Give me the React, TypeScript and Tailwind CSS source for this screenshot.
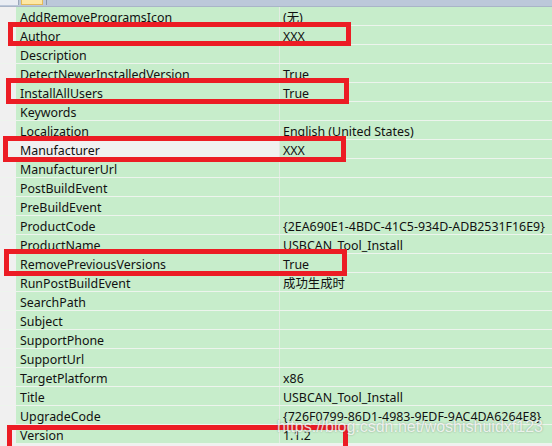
const rows: [string, string][] = [
  ['AddRemoveProgramsIcon', '(无)'],
  ['Author', 'XXX'],
  ['Description', ''],
  ['DetectNewerInstalledVersion', 'True'],
  ['InstallAllUsers', 'True'],
  ['Keywords', ''],
  ['Localization', 'English (United States)'],
  ['Manufacturer', 'XXX'],
  ['ManufacturerUrl', ''],
  ['PostBuildEvent', ''],
  ['PreBuildEvent', ''],
  ['ProductCode', '{2EA690E1-4BDC-41C5-934D-ADB2531F16E9}'],
  ['ProductName', 'USBCAN_Tool_Install'],
  ['RemovePreviousVersions', 'True'],
  ['RunPostBuildEvent', '成功生成时'],
  ['SearchPath', ''],
  ['Subject', ''],
  ['SupportPhone', ''],
  ['SupportUrl', ''],
  ['TargetPlatform', 'x86'],
  ['Title', 'USBCAN_Tool_Install'],
  ['UpgradeCode', '{726F0799-86D1-4983-9EDF-9AC4DA6264E8}'],
  ['Version', '1.1.2'],
];

// red annotation boxes drawn over the grid
const marks = [
  { left: 8, top: 22, width: 343, height: 24 },
  { left: 6, top: 78, width: 343, height: 26 },
  { left: 3, top: 136, width: 343, height: 26 },
  { left: 4, top: 249, width: 343, height: 27 },
  { left: 7, top: 425, width: 341, height: 26 },
];

export default function App() {
  return (
    <div
      className="relative w-[552px] h-[446px] overflow-hidden bg-[#f0f0f0] text-[12.4px] text-[#111]"
      style={{ fontFamily: '"Noto Sans", "Noto Sans CJK SC", sans-serif' }}
    >
      <div className="flex h-[7px] bg-[#bcc8da] border-b border-[#a9b5c7]">
        <div className="w-[19px] h-[5px] bg-[#e9edf3] border-r border-[#9aa6b8]" />
        <div className="ml-[2px] w-[22px] h-[5px] bg-[#fde7a4] border border-t-0 border-[#e3b95a]" />
        <div className="ml-[3px] w-px h-[5px] bg-[#8896aa]" />
      </div>
      {rows.map(([name, value]) => (
        <div key={name} className="flex h-[19px] border-b border-[#edf4ed]">
          <div className="w-4 shrink-0 bg-[#f0f0f0]" />
          <div
            className={
              name === 'Manufacturer'
                ? 'w-[264px] shrink-0 pl-1 pt-[3px] leading-[15px] whitespace-nowrap bg-[#f0f0f0] border-r border-[#e3e8e3]'
                : 'w-[264px] shrink-0 pl-1 pt-[3px] leading-[15px] whitespace-nowrap bg-[#c7edcb] border-r border-[#e3ece3]'
            }
          >
            {name}
          </div>
          <div className="flex-1 pl-[3px] pt-[3px] leading-[15px] whitespace-nowrap bg-[#c7edcb]">{value}</div>
        </div>
      ))}
      {marks.map((m, i) => (
        <div
          key={i}
          className="absolute border-[5px] border-[#ec1c24]"
          style={{ left: m.left, top: m.top, width: m.width, height: m.height }}
        />
      ))}
      <div
        className="absolute left-[277px] top-[415px] text-[16px] text-white/80 whitespace-nowrap"
        style={{ textShadow: '0 0 2px rgba(0,0,0,0.35)', fontFamily: '"Liberation Sans", sans-serif' }}
      >
        https://blog.csdn.net/woshishuidxf123
      </div>
    </div>
  );
}
